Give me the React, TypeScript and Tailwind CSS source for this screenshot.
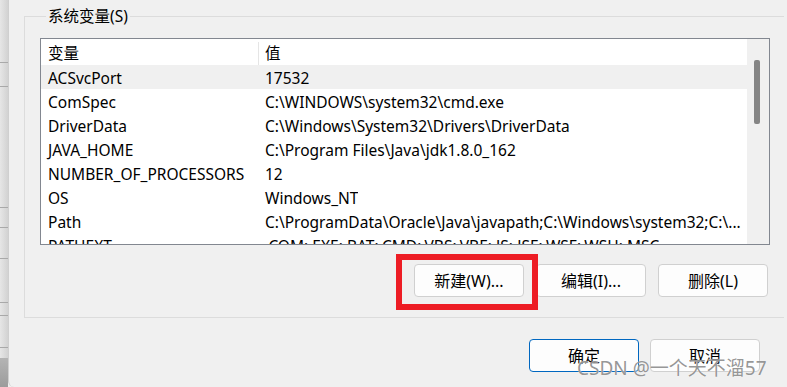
import React from "react"

// 系统变量 list — the lower half of the Windows "环境变量" dialog
const FONT = "font-['Noto_Sans','Noto_Sans_CJK_SC',sans-serif]"

const rows: [string, string][] = [
    ["ACSvcPort", "17532"],
    ["ComSpec", "C:\\WINDOWS\\system32\\cmd.exe"],
    ["DriverData", "C:\\Windows\\System32\\Drivers\\DriverData"],
    ["JAVA_HOME", "C:\\Program Files\\Java\\jdk1.8.0_162"],
    ["NUMBER_OF_PROCESSORS", "12"],
    ["OS", "Windows_NT"],
    ["Path", "C:\\ProgramData\\Oracle\\Java\\javapath;C:\\Windows\\system32;C:\\..."],
    ["PATHEXT", ".COM;.EXE;.BAT;.CMD;.VBS;.VBE;.JS;.JSE;.WSF;.WSH;.MSC"],
]

function WinButton({label, primary = false}: {label: string; primary?: boolean}) {
    return (
        <button
            className={
                "h-[33px] w-[110px] rounded-[4px] border bg-[#fdfdfd] pt-[1px] text-[16px] text-black " +
                (primary ? "border-[#0067c0]" : "border-[#d0d0d0]")
            }
        >
            {label}
        </button>
    )
}

// the parent window peeking out on the left
function BackStrip() {
    const seg = "border-b border-[#a9a9a9]"
    return (
        <div className="flex w-[8px] shrink-0 flex-col bg-gradient-to-r from-[#e6e6e6] to-[#d2d2d2]">
            <div className={`h-[63px] ${seg}`} />
            <div className={`h-[24px] ${seg}`} />
            <div className={`h-[121px] ${seg}`} />
            <div className={`h-[20px] ${seg}`} />
            <div className={`h-[31px] ${seg}`} />
            <div className={`h-[44px] ${seg}`} />
            <div className={`h-[13px] ${seg}`} />
            <div className={`h-[32px] ${seg}`} />
            <div className="h-[10px]" />
            <div className="flex-1 bg-gradient-to-b from-[#b4b4b4] to-[#9c9c9c]" />
        </div>
    )
}

export default function App() {
    return (
        <div className={`relative flex h-[387px] w-[787px] overflow-hidden bg-[#f0f0f0] text-[15.5px] text-black ${FONT}`}>
            <BackStrip />
            <div className="flex flex-1 flex-col rounded-bl-[6px] border-l border-[#cfcfcf] bg-[#f0f0f0] pl-[15px]">
                <fieldset className="mt-[6px] w-[760px] border border-r-0 border-[#dcdcdc] pl-[15px] pb-[20px]">
                    <legend className="ml-[6px] px-[2px] text-[15.5px] leading-[20px]">系统变量(S)</legend>

                    <div className="mt-[12px] flex h-[207px] w-[730px] overflow-hidden border border-[#828790] bg-white">
                        <div className="flex-1 overflow-hidden">
                            <div className="flex h-[26px] items-center pt-[3px]">
                                <div className="flex h-full w-[218px] items-center border-r border-[#e5e5e5] pl-[7px]">变量</div>
                                <div className="pl-[6px]">值</div>
                            </div>
                            {rows.map(([name, value], i) => (
                                <div
                                    key={name}
                                    className={"flex h-[24px] items-center whitespace-nowrap pt-[3px] " + (i === 0 ? "bg-[#f0f0f0]" : "")}
                                >
                                    <div className="w-[218px] shrink-0 pl-[7px]">{name}</div>
                                    <div className="overflow-hidden pl-[6px]">{value}</div>
                                </div>
                            ))}
                        </div>
                        <div className="w-[22px] shrink-0 bg-[#f0f0f0] pt-[21px] pl-[7px]">
                            <div className="h-[64px] w-[6px] rounded-[2px] bg-[#858585]" />
                        </div>
                    </div>

                    <div className="mt-[19px] flex justify-end gap-[12px] pr-[16px]">
                        <div className="relative">
                            <WinButton label="新建(W)..." />
                            <span className="pointer-events-none absolute -bottom-[13px] -left-[18px] -right-[14px] -top-[10px] border-[6px] border-[#ed1c24]" />
                        </div>
                        <WinButton label="编辑(I)..." />
                        <WinButton label="删除(L)" />
                    </div>
                </fieldset>

                <div className="mt-[21px] flex justify-end gap-[11px] pr-[27px]">
                    <WinButton label="确定" primary />
                    <WinButton label="取消" />
                </div>
            </div>

            <div className="pointer-events-none absolute left-[577px] top-[356px] text-[19px] leading-[24px] text-[#7a7a7a]/80 [text-shadow:0_0_1px_#ffffff]">
                CSDN @一个天不溜57
            </div>
        </div>
    )
}
